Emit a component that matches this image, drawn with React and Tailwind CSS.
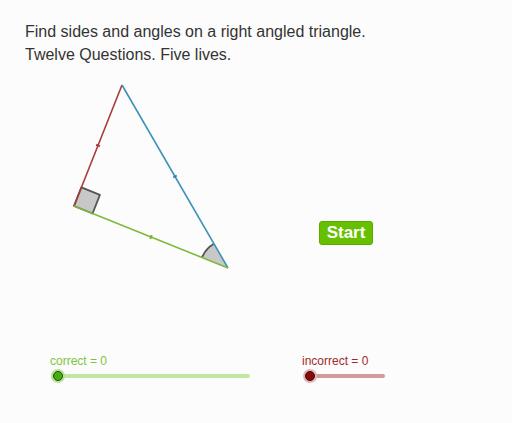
import React from "react";

export default function App() {
  // triangle vertices
  const A = [122, 85];
  const B = [74, 206];
  const C = [228, 268];
  const norm = (v) => {
    const l = Math.hypot(v[0], v[1]);
    return [v[0] / l, v[1] / l];
  };
  const uBA = norm([A[0] - B[0], A[1] - B[1]]);
  const uBC = norm([C[0] - B[0], C[1] - B[1]]);
  const s = 20;
  const sq = [
    B,
    [B[0] + s * uBA[0], B[1] + s * uBA[1]],
    [B[0] + s * (uBA[0] + uBC[0]), B[1] + s * (uBA[1] + uBC[1])],
    [B[0] + s * uBC[0], B[1] + s * uBC[1]],
  ];
  const uCB = norm([B[0] - C[0], B[1] - C[1]]);
  const uCA = norm([A[0] - C[0], A[1] - C[1]]);
  const r = 28;
  const p1 = [C[0] + r * uCB[0], C[1] + r * uCB[1]];
  const p2 = [C[0] + r * uCA[0], C[1] + r * uCA[1]];
  const mid = (P, Q) => [(P[0] + Q[0]) / 2, (P[1] + Q[1]) / 2];
  const tick = (P, Q, color) => {
    const m = mid(P, Q);
    const u = norm([Q[0] - P[0], Q[1] - P[1]]);
    const n = [-u[1], u[0]];
    const h = 2;
    return (
      <line
        x1={m[0] + n[0] * h}
        y1={m[1] + n[1] * h}
        x2={m[0] - n[0] * h}
        y2={m[1] - n[1] * h}
        stroke={color}
        strokeWidth="2"
      />
    );
  };

  return (
    <div className="relative w-[512px] h-[423px] overflow-hidden bg-[#fcfcfc] font-['Liberation_Sans',Arial,sans-serif]">
      <div className="pl-[25px] pt-[20px] text-[16px] leading-[23px] text-[#333333]">
        <p>Find sides and angles on a right angled triangle.</p>
        <p>Twelve Questions. Five lives.</p>
      </div>

      <svg className="absolute left-0 top-0" width="512" height="423" viewBox="0 0 512 423">
        {/* right angle square */}
        <polygon
          points={sq.map((p) => p.join(",")).join(" ")}
          fill="#c8c8c8"
          stroke="#555555"
          strokeWidth="1.8"
          strokeLinejoin="round"
        />
        {/* angle sector at C */}
        <path
          d={`M ${C[0]} ${C[1]} L ${p1[0]} ${p1[1]} A ${r} ${r} 0 0 1 ${p2[0]} ${p2[1]} Z`}
          fill="#c8c8c8"
          stroke="none"
        />
        <path
          d={`M ${p1[0]} ${p1[1]} A ${r} ${r} 0 0 1 ${p2[0]} ${p2[1]}`}
          fill="none"
          stroke="#555555"
          strokeWidth="1.8"
        />
        {/* sides */}
        <line x1={A[0]} y1={A[1]} x2={B[0]} y2={B[1]} stroke="#a83c3c" strokeWidth="1.6" />
        <line x1={A[0]} y1={A[1]} x2={C[0]} y2={C[1]} stroke="#3d92b8" strokeWidth="1.6" />
        <line x1={B[0]} y1={B[1]} x2={C[0]} y2={C[1]} stroke="#80b83c" strokeWidth="1.6" />
        {tick(A, B, "#a83c3c")}
        {tick(A, C, "#2f7fa6")}
        {tick(B, C, "#78b030")}

        {/* correct slider */}
        <line x1="58" y1="376" x2="248" y2="376" stroke="#c3e6a4" strokeWidth="4" strokeLinecap="round" />
        <circle cx="58" cy="376" r="7" fill="#b9e09a" />
        <circle cx="58" cy="376" r="4.5" fill="#44b010" stroke="#2a4a10" strokeWidth="1" />

        {/* incorrect slider */}
        <line x1="310" y1="376" x2="383" y2="376" stroke="#d39a9a" strokeWidth="4" strokeLinecap="round" />
        <circle cx="310" cy="376" r="7" fill="#e2b4b4" />
        <circle cx="310" cy="376" r="4.5" fill="#8a0a0a" stroke="#3a0a0a" strokeWidth="1" />
      </svg>

      <div className="absolute left-[50px] top-[354px] text-[12px] leading-[15px] text-[#7cc440]">
        correct = 0
      </div>
      <div className="absolute left-[302px] top-[354px] text-[12px] leading-[15px] text-[#a12a2a]">
        incorrect = 0
      </div>

      <button className="absolute left-[319px] top-[221px] w-[54px] h-[24px] rounded-[3px] bg-[#66c000] border border-[#5aaa00] text-white font-bold text-[17px] leading-[20px] flex items-center justify-center">
        Start
      </button>
    </div>
  );
}
